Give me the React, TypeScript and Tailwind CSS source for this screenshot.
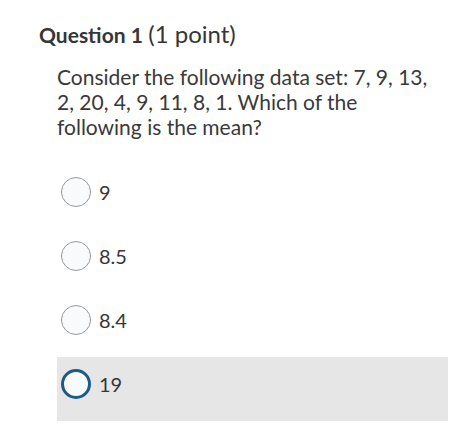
import React from 'react';

const options = ['9', '8.5', '8.4', '19'];

export default function App() {
    const selected = 3;

    return (
        <div className="w-[474px] h-[439px] bg-white font-['Lato',sans-serif] text-[#3a3a3a] overflow-hidden">
            <div className="pt-[20px] pl-[39px]">
                <h1 className="text-[21px] leading-[28px] text-[#363636]">
                    <span className="font-bold">Question 1</span>{' '}
                    <span className="font-normal text-[24px]">(1 point)</span>
                </h1>
            </div>
            <div className="pl-[57px] pr-[26px]">
                <p className="mt-[15px] text-[21px] leading-[25px] text-[#393939] w-[385px]">
                    Consider the following data set: 7, 9, 13, 2, 20, 4, 9, 11, 8, 1. Which of the following is the mean?
                </p>
                <div className="mt-[26px] flex flex-col w-[391px]">
                    {options.map((opt, i) => (
                        <label
                            key={opt}
                            className={
                                i === selected
                                    ? 'flex items-start gap-[8px] h-[64px] pt-[12px] pl-[4px] bg-[#e6e6e6]'
                                    : 'flex items-start gap-[8px] h-[64px] pt-[12px] pl-[4px]'
                            }
                        >
                            <span
                                className={
                                    i === selected
                                        ? 'w-[30px] h-[30px] rounded-full border-[3px] border-[#1d5a88] bg-[#f9fafc] shrink-0'
                                        : 'w-[30px] h-[30px] rounded-full border-[1.5px] border-[#9a9a9a] bg-[#f9fafc] shrink-0'
                                }
                            />
                            <span className="text-[20px] leading-[30px] text-[#363636]">{opt}</span>
                        </label>
                    ))}
                </div>
            </div>
        </div>
    );
}
